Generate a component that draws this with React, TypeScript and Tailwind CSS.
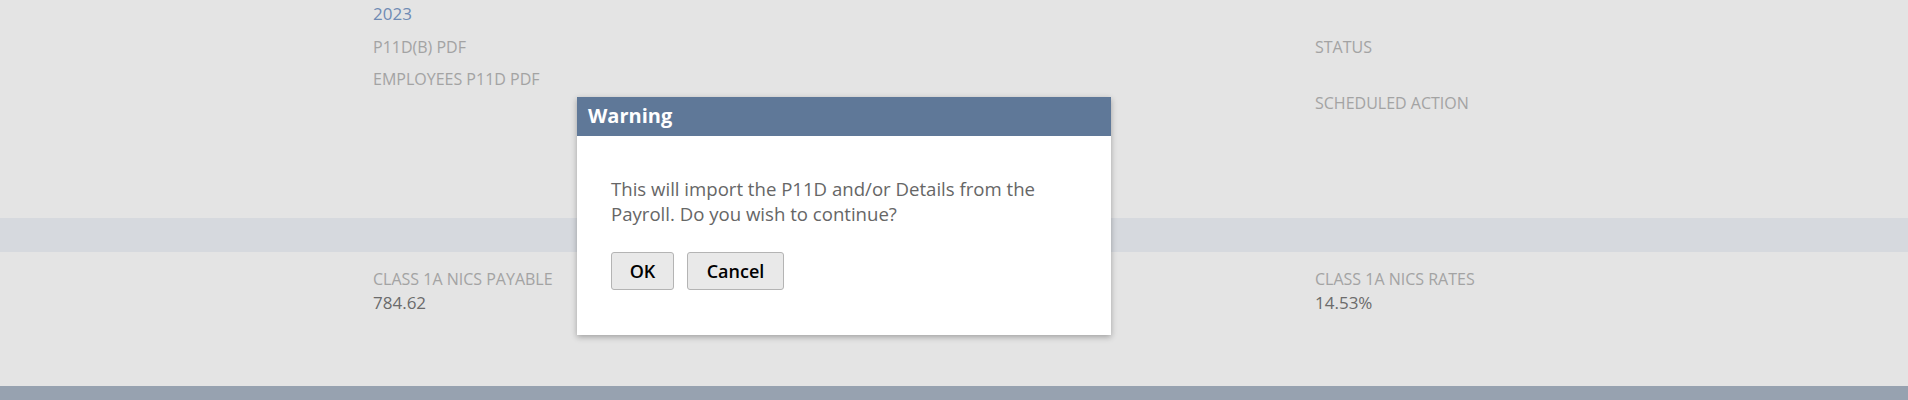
export default function App() {
  return (
    <div className="relative h-[400px] w-full overflow-hidden bg-[#e4e4e4] font-['Open_Sans',sans-serif]">
      <div className="flex h-[218px] pl-[373px]">
        <div className="w-[942px]">
          <div className="mt-[4px] text-[17px] leading-[20px] text-[#6f8bb4]">2023</div>
          <div className="mt-[13px] text-[16px] leading-[20px] uppercase text-[#a3a3a3]">P11D(B) PDF</div>
          <div className="mt-[12px] text-[16px] leading-[20px] uppercase text-[#a3a3a3]">Employees P11D PDF</div>
        </div>
        <div className="flex-1">
          <div className="mt-[37px] text-[16px] leading-[20px] uppercase text-[#a3a3a3]">Status</div>
          <div className="mt-[36px] text-[16px] leading-[20px] uppercase text-[#a3a3a3]">Scheduled Action</div>
        </div>
      </div>
      <div className="h-[34px] bg-[#d6d9de]" />
      <div className="flex h-[134px] pl-[373px] pt-[17px]">
        <div className="w-[942px]">
          <div className="text-[16px] leading-[20px] uppercase text-[#a3a3a3]">Class 1A NICs Payable</div>
          <div className="mt-[3px] text-[17px] leading-[22px] text-[#6b6b6b]">784.62</div>
        </div>
        <div className="flex-1">
          <div className="text-[16px] leading-[20px] uppercase text-[#a3a3a3]">Class 1A NICs Rates</div>
          <div className="mt-[3px] text-[17px] leading-[22px] text-[#6b6b6b]">14.53%</div>
        </div>
      </div>
      <div className="h-[14px] overflow-hidden bg-[#97a2b0] pl-[4px] pt-[11px] text-[14px] leading-[18px] text-white">
        Close
      </div>

      <div className="absolute left-[577px] top-[97px] h-[238px] w-[534px] bg-white shadow-[0_2px_6px_rgba(0,0,0,0.3)]">
        <div className="h-[39px] bg-[#5f7898] px-[11px] text-[20px] font-bold leading-[37px] text-white">Warning</div>
        <div className="px-[34px] pt-[40px]">
          <p className="text-[18.6px] leading-[25px] text-[#666666]">
            This will import the P11D and/or Details from the Payroll. Do you wish to continue?
          </p>
          <div className="mt-[26px] flex gap-[13px]">
            <button className="h-[38px] w-[63px] rounded-[3px] border border-[#b4b4b4] bg-[#e9e9e9] text-[18px] font-semibold text-black">
              OK
            </button>
            <button className="h-[38px] w-[97px] rounded-[3px] border border-[#b4b4b4] bg-[#e9e9e9] text-[18px] font-semibold text-black">
              Cancel
            </button>
          </div>
        </div>
      </div>
    </div>
  );
}
